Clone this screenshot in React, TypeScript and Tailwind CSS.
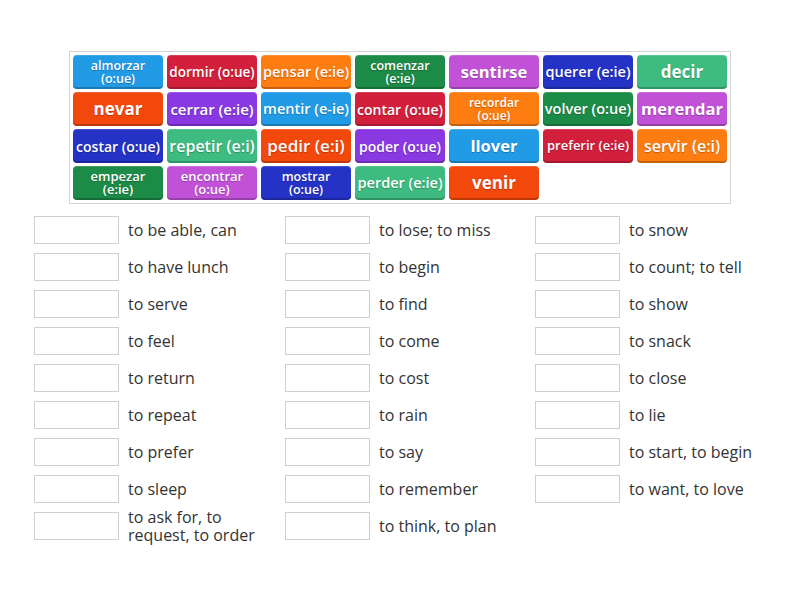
import React from "react";

type Tile = { lines: string[]; color: string; size: string; bold?: boolean };

const C = {
  lb: "bg-[#229be6]",
  red: "bg-[#d2203c]",
  or: "bg-[#fd7d10]",
  dg: "bg-[#1d8b48]",
  vi: "bg-[#c152d8]",
  db: "bg-[#2433c6]",
  tl: "bg-[#3dbb80]",
  ro: "bg-[#f3480c]",
  pu: "bg-[#8a39e2]",
};

const tiles: Tile[] = [
  { lines: ["almorzar", "(o:ue)"], color: C.lb, size: "text-[12.5px] leading-[13.5px]" },
  { lines: ["dormir (o:ue)"], color: C.red, size: "text-[13.5px]" },
  { lines: ["pensar (e:ie)"], color: C.or, size: "text-[14.5px]" },
  { lines: ["comenzar", "(e:ie)"], color: C.dg, size: "text-[12.5px] leading-[13.5px]" },
  { lines: ["sentirse"], color: C.vi, size: "text-[16.5px]", bold: true },
  { lines: ["querer (e:ie)"], color: C.db, size: "text-[14.5px]" },
  { lines: ["decir"], color: C.tl, size: "text-[17px]", bold: true },

  { lines: ["nevar"], color: C.ro, size: "text-[17px]", bold: true },
  { lines: ["cerrar (e:ie)"], color: C.pu, size: "text-[15px]" },
  { lines: ["mentir (e-ie)"], color: C.lb, size: "text-[14.5px]" },
  { lines: ["contar (o:ue)"], color: C.red, size: "text-[14px]" },
  { lines: ["recordar", "(o:ue)"], color: C.or, size: "text-[12px] leading-[13.5px]" },
  { lines: ["volver (o:ue)"], color: C.dg, size: "text-[14.5px]" },
  { lines: ["merendar"], color: C.vi, size: "text-[16.5px]", bold: true },

  { lines: ["costar (o:ue)"], color: C.db, size: "text-[14px]" },
  { lines: ["repetir (e:i)"], color: C.tl, size: "text-[16px]" },
  { lines: ["pedir (e:i)"], color: C.ro, size: "text-[17px]" },
  { lines: ["poder (o:ue)"], color: C.pu, size: "text-[14px]" },
  { lines: ["llover"], color: C.lb, size: "text-[16.5px]", bold: true },
  { lines: ["preferir (e:ie)"], color: C.red, size: "text-[13px]" },
  { lines: ["servir (e:i)"], color: C.or, size: "text-[16px]" },

  { lines: ["empezar", "(e:ie)"], color: C.dg, size: "text-[13px] leading-[13.5px]" },
  { lines: ["encontrar", "(o:ue)"], color: C.vi, size: "text-[13px] leading-[13.5px]" },
  { lines: ["mostrar", "(o:ue)"], color: C.db, size: "text-[12.5px] leading-[13.5px]" },
  { lines: ["perder (e:ie)"], color: C.tl, size: "text-[14.5px]" },
  { lines: ["venir"], color: C.ro, size: "text-[17px]", bold: true },
];

const cols: string[][] = [
  [
    "to be able, can",
    "to have lunch",
    "to serve",
    "to feel",
    "to return",
    "to repeat",
    "to prefer",
    "to sleep",
    "to ask for, to request, to order",
  ],
  [
    "to lose; to miss",
    "to begin",
    "to find",
    "to come",
    "to cost",
    "to rain",
    "to say",
    "to remember",
    "to think, to plan",
  ],
  [
    "to snow",
    "to count; to tell",
    "to show",
    "to snack",
    "to close",
    "to lie",
    "to start, to begin",
    "to want, to love",
  ],
];

export default function App() {
  return (
    <div className="w-[800px] h-[600px] bg-white font-['Open_Sans',sans-serif] pt-[51px]">
      <div className="mx-auto w-[662px] border border-[#d4d4d4] p-[3px]">
        <div className="grid grid-cols-[repeat(7,90px)] gap-x-[4px] gap-y-[3px]">
          {tiles.map((t, i) => (
            <div
              key={i}
              className={`${t.color} h-[34px] rounded-[4px] shadow-[inset_0_-2px_0_rgba(0,0,0,0.22),inset_0_1px_0_rgba(255,255,255,0.15)] flex flex-col items-center justify-center text-center text-white whitespace-nowrap [text-shadow:0_1px_1px_rgba(0,0,0,0.25)] ${t.size} ${t.bold ? "font-bold" : "font-semibold"}`}
            >
              {t.lines.map((l, j) => (
                <span key={j} className="block">
                  {l}
                </span>
              ))}
            </div>
          ))}
        </div>
      </div>
      <div className="mt-[12px] ml-[34px] grid grid-cols-[251px_250px_250px]">
        {cols.map((col, ci) => (
          <div key={ci} className="flex flex-col gap-[9px]">
            {col.map((txt, ri) => (
              <div key={ri} className="flex items-center h-[28px]">
                <div className="w-[85px] h-[28px] shrink-0 border border-[#cfcfcf] bg-white" />
                <div className="ml-[9px] w-[150px] text-[16px] leading-[18px] text-[#333333]">
                  {txt}
                </div>
              </div>
            ))}
          </div>
        ))}
      </div>
    </div>
  );
}
